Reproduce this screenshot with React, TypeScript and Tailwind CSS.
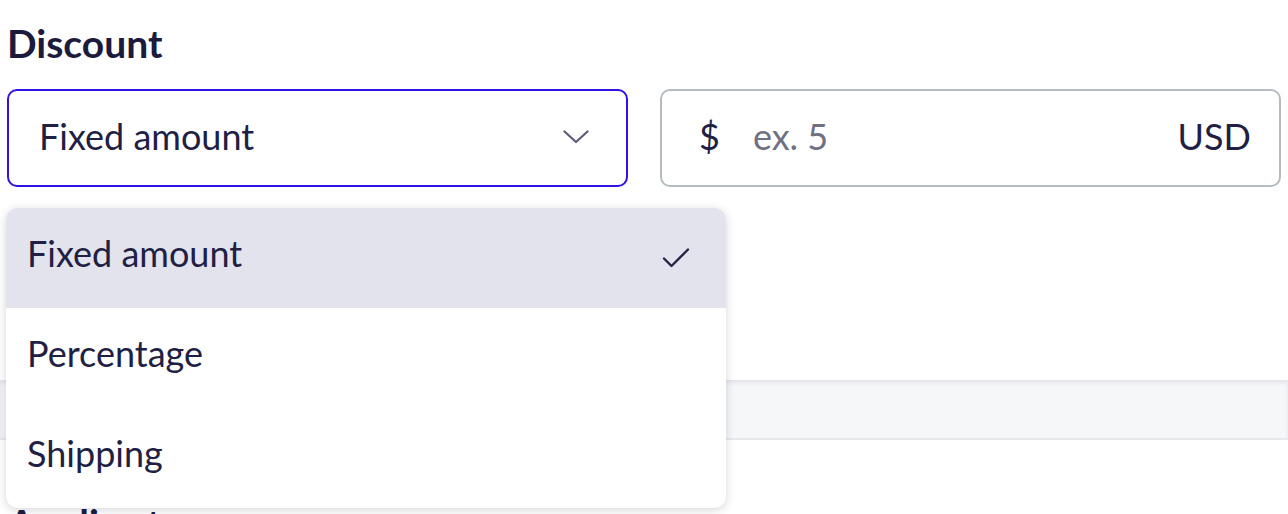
import React from "react";

const font = { fontFamily: "Lato, 'Noto Sans', sans-serif" };

export default function App() {
  return (
    <div
      className="w-[1288px] h-[514px] overflow-hidden bg-white relative text-[#221f44]"
      style={font}
    >
      <section className="h-[380px] px-[7px] pt-[24px]">
        <h2 className="text-[39px] leading-[39px] font-bold text-[#1c1a3d] pl-[0px]">Discount</h2>
        <div className="grid grid-cols-2 gap-[32px] mt-[26px]">
          <div className="relative">
            <div className="h-[98px] rounded-[10px] border-[2px] border-[#2e12e6] flex items-center justify-between pl-[30px] pr-[37px] pb-[4px]">
              <span className="text-[36px] text-[#221f44]">Fixed amount</span>
              <svg width="26" height="14" viewBox="0 0 26 14" fill="none" className="mt-[2px]">
                <path d="M1.5 1.5 L13 12 L24.5 1.5" stroke="#5b5c77" strokeWidth="2.2" strokeLinecap="round" strokeLinejoin="round" />
              </svg>
            </div>
            <div className="absolute z-10 left-[-1px] top-[119px] w-[720px] rounded-[12px] bg-white overflow-hidden shadow-[0_2px_10px_rgba(30,30,60,0.18)]">
              <div className="h-[100px] bg-[#e3e3ed] flex items-center justify-between pl-[21px] pr-[36px] pb-[10px]">
                <span className="text-[36px]">Fixed amount</span>
                <svg width="28" height="22" viewBox="0 0 28 22" fill="none" className="mt-[10px]">
                  <path d="M2 11.5 L9.5 19 L26 2.5" stroke="#262347" strokeWidth="2.4" strokeLinecap="round" strokeLinejoin="round" />
                </svg>
              </div>
              <div className="h-[100px] flex items-center pl-[21px] pb-[10px]">
                <span className="text-[36px]">Percentage</span>
              </div>
              <div className="h-[100px] flex items-center pl-[21px] pb-[10px]">
                <span className="text-[36px]">Shipping</span>
              </div>
            </div>
          </div>
          <div className="h-[98px] rounded-[10px] border-[2px] border-[#b4bcc1] flex items-center pl-[37px] pr-[28px] pb-[4px] text-[36px]">
            <span className="text-[#221f44]">$</span>
            <span className="ml-[33px] text-[#6f7183] flex-1">ex. 5</span>
            <span className="text-[#221f44]">USD</span>
          </div>
        </div>
      </section>
      <div className="h-[60px] bg-[#f6f7f9] border-b-[2px] border-[#e8e9ec] shadow-[inset_0_3px_4px_rgba(30,30,60,0.08)]" />
      <section className="px-[8px] pt-[64px]">
        <h2 className="text-[39px] leading-[39px] font-bold text-[#1c1a3d]">Applies to</h2>
      </section>
    </div>
  );
}
